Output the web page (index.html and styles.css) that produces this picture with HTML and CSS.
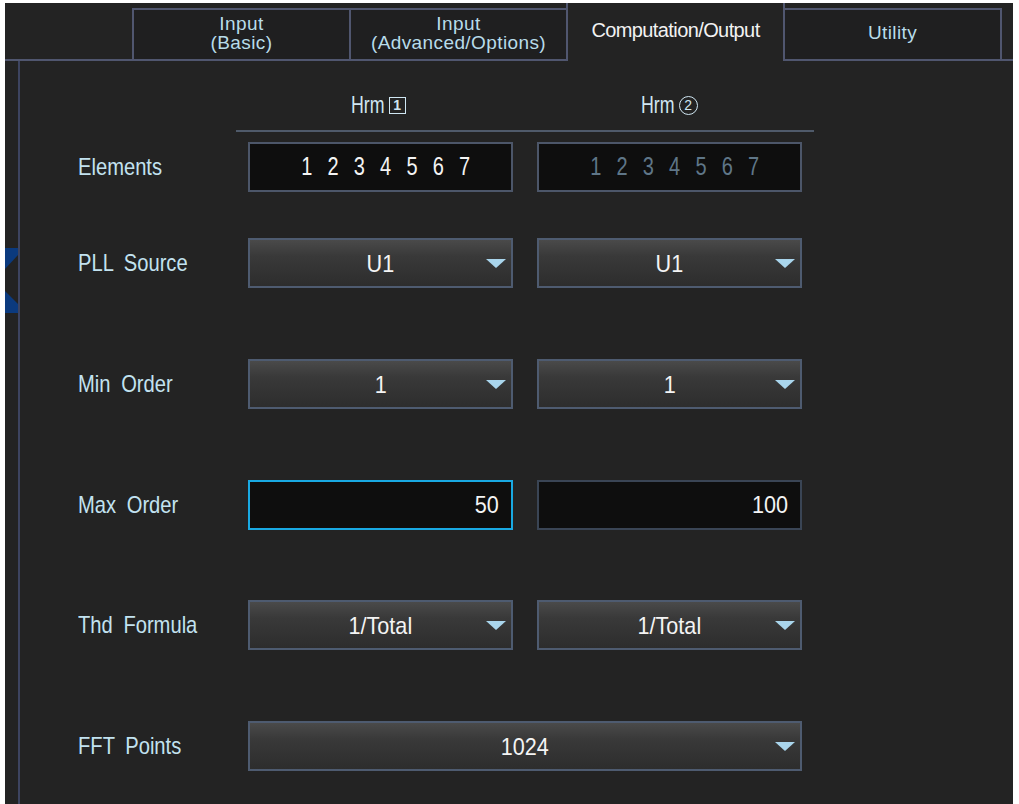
FILE: index.html
```html
<!DOCTYPE html>
<html>
<head>
<meta charset="utf-8">
<link rel="stylesheet" href="styles.css">
</head>
<body>
<div class="frame">
  <div class="tabbar">
    <div class="tab-lead"></div>
    <div class="tab">Input<br>(Basic)</div>
    <div class="tab">Input<br>(Advanced/Options)</div>
    <div class="tab active">Computation/Output</div>
    <div class="tab">Utility</div>
    <div class="tab-tail"></div>
  </div>
  <div class="main">
    <div class="side">
      <svg class="notch" width="13" height="65" viewBox="0 0 13 65">
        <polygon points="0,0 13,0 13,7 0,21" fill="#0b3a7e"/>
        <polygon points="0,43 13,56 13,65 0,65" fill="#0b3a7e"/>
      </svg>
    </div>
    <div class="content">
      <div class="row head-row">
        <div></div>
        <div class="heads">
          <div class="hrm"><span class="t">Hrm</span><span class="boxed">1</span></div>
          <div class="hrm"><span class="t">Hrm</span><span class="circled">2</span></div>
        </div>
      </div>

      <div class="row r-elements">
        <div class="label"><span class="t">Elements</span></div>
        <div class="field elements"><span class="t digits"><span>1</span><span>2</span><span>3</span><span>4</span><span>5</span><span>6</span><span>7</span></span></div>
        <div class="field elements disabled"><span class="t digits"><span>1</span><span>2</span><span>3</span><span>4</span><span>5</span><span>6</span><span>7</span></span></div>
      </div>

      <div class="row r-pll">
        <div class="label"><span class="t">PLL Source</span></div>
        <div class="field drop"><span class="t">U1</span><i class="arrow"></i></div>
        <div class="field drop"><span class="t">U1</span><i class="arrow"></i></div>
      </div>

      <div class="row r-std">
        <div class="label"><span class="t">Min Order</span></div>
        <div class="field drop"><span class="t">1</span><i class="arrow"></i></div>
        <div class="field drop"><span class="t">1</span><i class="arrow"></i></div>
      </div>

      <div class="row r-std">
        <div class="label"><span class="t">Max Order</span></div>
        <div class="field num selected"><span class="t">50</span></div>
        <div class="field num"><span class="t">100</span></div>
      </div>

      <div class="row r-thd">
        <div class="label"><span class="t">Thd Formula</span></div>
        <div class="field drop"><span class="t">1/Total</span><i class="arrow"></i></div>
        <div class="field drop"><span class="t">1/Total</span><i class="arrow"></i></div>
      </div>

      <div class="row r-std">
        <div class="label"><span class="t">FFT Points</span></div>
        <div class="field drop wide"><span class="t">1024</span><i class="arrow"></i></div>
      </div>
    </div>
  </div>
</div>
</body>
</html>
```
FILE: styles.css
```css
html, body {
  margin: 0;
  padding: 0;
  background: #ffffff;
}
body {
  width: 1019px;
  height: 804px;
  overflow: hidden;
  font-family: "Liberation Sans", Arial, sans-serif;
}
.frame {
  margin: 3px 6px 0 5px;
  height: 801px;
  background: #232323;
  display: flex;
  flex-direction: column;
}
.t {
  display: inline-block;
  white-space: nowrap;
}

/* tab bar */
.tabbar {
  display: flex;
  height: 58px;
  flex: none;
}
.tab-lead {
  width: 127px;
  border-bottom: 2px solid #50566f;
}
.tab-tail {
  flex: 1;
  border-bottom: 2px solid #50566f;
}
.tab {
  box-sizing: border-box;
  width: 219px;
  margin-top: 5px;
  border: 2px solid #50566f;
  background: #1f1f20;
  color: #b8dcea;
  font-size: 19px;
  line-height: 19px;
  letter-spacing: 0.4px;
  display: flex;
  align-items: center;
  justify-content: center;
  text-align: center;
  padding-bottom: 4px;
}
.tab + .tab { margin-left: -2px; }
.tab.active {
  margin-top: 0;
  border-top: none;
  border-bottom: none;
  background: #232323;
  color: #f2f2f2;
  font-size: 20px;
  line-height: 20px;
  letter-spacing: -0.6px;
  padding-bottom: 5px;
}

/* main */
.main {
  flex: 1;
  display: flex;
}
.side {
  width: 13px;
  border-right: 2px solid #3d4460;
  display: flex;
  flex-direction: column;
}
.notch {
  display: block;
  margin-top: 187px;
}
.content {
  flex: 1;
  padding-left: 58px;
}
.row {
  display: grid;
  grid-template-columns: 146px 265px 265px;
  column-gap: 24px;
  align-items: center;
}
.head-row { margin-top: 32px; }
.r-elements { margin-top: 10px; }
.r-pll { margin-top: 46px; }
.r-std { margin-top: 71px; }
.r-thd { margin-top: 70px; }

.heads {
  grid-column: 2 / 4;
  margin: 0 -12px;
  padding-bottom: 13px;
  border-bottom: 2px solid #4f5a6a;
  display: grid;
  grid-template-columns: 1fr 1fr;
}
.hrm {
  color: #cfe6f2;
  font-size: 24px;
  line-height: 24px;
  display: flex;
  justify-content: center;
  align-items: center;
  gap: 4px;
}
.hrm .t {
  transform: scaleX(0.74);
  margin: 0 -6px;
}
.heads .hrm:first-child { padding-right: 4px; }
.boxed, .circled {
  display: inline-block;
  box-sizing: border-box;
  width: 17px;
  height: 17px;
  border: 1.5px solid #cfe6f2;
  font-size: 14px;
  line-height: 14px;
  text-align: center;
  font-weight: bold;
  margin-top: 1px;
}
.circled {
  width: 19px;
  height: 19px;
  line-height: 16px;
  border-radius: 50%;
  font-weight: normal;
  font-size: 14px;
}

.label {
  color: #c2e2f0;
  font-size: 24px;
  word-spacing: 6px;
  white-space: nowrap;
}
.label .t {
  transform: scaleX(0.84);
  transform-origin: left center;
}

.field {
  box-sizing: border-box;
  height: 50px;
  border: 2px solid #4c5669;
  color: #f4f4f4;
  font-size: 24px;
  position: relative;
  display: flex;
  align-items: center;
  justify-content: center;
}
.field > .t {
  transform: scaleX(0.9);
}
.elements {
  background: #0e0e0e;
  padding-left: 10px;
  font-size: 25px;
  padding-bottom: 2px;
}
.field > .digits {
  display: inline-flex;
  gap: 19px;
  transform: scaleX(0.8);
}
.elements.disabled { color: #5f7688; }
.drop {
  background: linear-gradient(#4a4a4a 0%, #393939 35%, #2d2d2d 100%);
  border-color: #4e5b70;
  padding-top: 2px;
}
.drop.wide { grid-column: 2 / 4; }
.arrow {
  position: absolute;
  right: 5px;
  top: 19px;
  width: 0;
  height: 0;
  border-left: 10px solid transparent;
  border-right: 10px solid transparent;
  border-top: 9px solid #a9d5ec;
}
.num {
  background: #0e0e0e;
  border-color: #3a4555;
  justify-content: flex-end;
  padding-right: 12px;
}
.num > .t { transform-origin: right center; }
.num.selected { border-color: #19a9e2; }
```
